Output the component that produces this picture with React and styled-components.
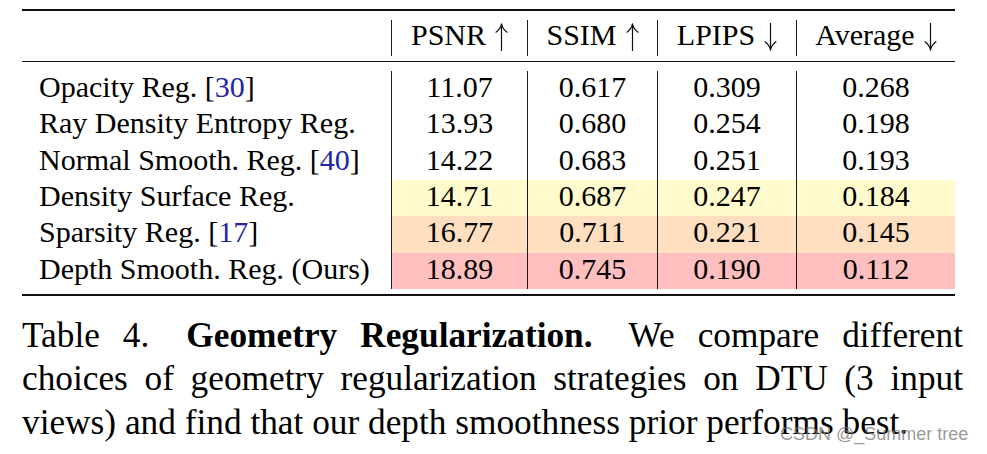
import React from "react";
import styled, { createGlobalStyle } from "styled-components";

const Global = createGlobalStyle`
  html, body { margin: 0; padding: 0; background: #ffffff; }
  body { width: 987px; height: 454px; overflow: hidden; font-family: "Liberation Serif", "Times New Roman", serif; color: #000; }
`;

const Page = styled.div`
  position: relative;
  width: 987px;
  height: 454px;
  padding-top: 9px;
  box-sizing: border-box;
`;

const Table = styled.div`
  width: 933px;
  margin-left: 22px;
  display: flex;
  flex-direction: column;
`;

const Rule = styled.div`
  height: ${(p) => p.$h}px;
  background: #111;
  margin-top: ${(p) => p.$gap}px;
`;

const Grid = styled.div`
  display: grid;
  grid-template-columns: 369px 136px 130px 139px 159px;
  margin-top: ${(p) => p.$gap || 0}px;
  font-size: 30px;
`;

const Cell = styled.div`
  height: ${(p) => (p.$head ? 36 : 36.33)}px;
  line-height: ${(p) => (p.$head ? 29 : 31)}px;
  box-sizing: border-box;
  text-align: center;
  white-space: nowrap;
  border-left: 1px solid #1a1a1a;
  background: ${(p) => p.$bg || "transparent"};
`;

const LabelCell = styled.div`
  height: ${(p) => (p.$head ? 36 : 36.33)}px;
  line-height: ${(p) => (p.$head ? 29 : 31)}px;
  padding-left: 17px;
  white-space: nowrap;
`;

const Cite = styled.span`
  color: #2626a4;
`;

const ArrowSvg = styled.svg`
  display: inline-block;
  width: 13px;
  height: 28px;
  margin-left: 9px;
  vertical-align: -6px;
`;

const Arrow = ({ down }) => (
  <ArrowSvg viewBox="0 0 13 28" fill="none" stroke="#111" strokeWidth="1.2" strokeLinecap="round">
    <g transform={down ? "rotate(180 6.5 14)" : undefined}>
      <path d="M6.5 1.5 V27.5" />
      <path d="M6.5 1.2 Q5.6 5.8 1 9.2" />
      <path d="M6.5 1.2 Q7.4 5.8 12 9.2" />
    </g>
  </ArrowSvg>
);

const Caption = styled.div`
  width: 941px;
  margin: 18px 0 0 22px;
  font-size: 35.3px;
  line-height: 43.5px;
`;

const Line = styled.div`
  text-align: justify;
  text-align-last: ${(p) => (p.$last ? "left" : "justify")};
  white-space: nowrap;
`;

const Title = styled.b`
  margin: 0 36px 0 37px;
`;

const Watermark = styled.div`
  position: absolute;
  left: 780px;
  top: 424px;
  font-family: "Liberation Sans", Arial, sans-serif;
  font-size: 18px;
  line-height: 20px;
  color: rgba(120, 120, 120, 0.75);
  white-space: nowrap;
`;

const rows = [
  { label: <>Opacity Reg. [<Cite>30</Cite>]</>, v: ["11.07", "0.617", "0.309", "0.268"] },
  { label: <>Ray Density Entropy Reg.</>, v: ["13.93", "0.680", "0.254", "0.198"] },
  { label: <>Normal Smooth. Reg. [<Cite>40</Cite>]</>, v: ["14.22", "0.683", "0.251", "0.193"] },
  { label: <>Density Surface Reg.</>, v: ["14.71", "0.687", "0.247", "0.184"], bg: "#fffbcc" },
  { label: <>Sparsity Reg. [<Cite>17</Cite>]</>, v: ["16.77", "0.711", "0.221", "0.145"], bg: "#ffdfbf" },
  { label: <>Depth Smooth. Reg. (Ours)</>, v: ["18.89", "0.745", "0.190", "0.112"], bg: "#ffbfbf" },
];

const heads = [
  { t: "PSNR", down: false },
  { t: "SSIM", down: false },
  { t: "LPIPS", down: true },
  { t: "Average", down: true },
];

export default function App() {
  return (
    <Page>
      <Global />
      <Table>
        <Rule $h={2} $gap={0} />
        <Grid $gap={9}>
          <LabelCell $head />
          {heads.map((h) => (
            <Cell $head key={h.t}>
              {h.t}
              <Arrow down={h.down} />
            </Cell>
          ))}
        </Grid>
        <Rule $h={1} $gap={5} />
        <Grid $gap={9}>
          {rows.map((r, i) => (
            <React.Fragment key={i}>
              <LabelCell>{r.label}</LabelCell>
              {r.v.map((v, j) => (
                <Cell key={j} $bg={r.bg}>{v}</Cell>
              ))}
            </React.Fragment>
          ))}
        </Grid>
        <Rule $h={2} $gap={5} />
      </Table>
      <Caption>
        <Line>
          Table 4.<Title>Geometry Regularization.</Title>We compare different
        </Line>
        <Line>choices of geometry regularization strategies on DTU (3 input</Line>
        <Line $last>views) and find that our depth smoothness prior performs best.</Line>
      </Caption>
      <Watermark>CSDN @_Summer tree</Watermark>
    </Page>
  );
}
